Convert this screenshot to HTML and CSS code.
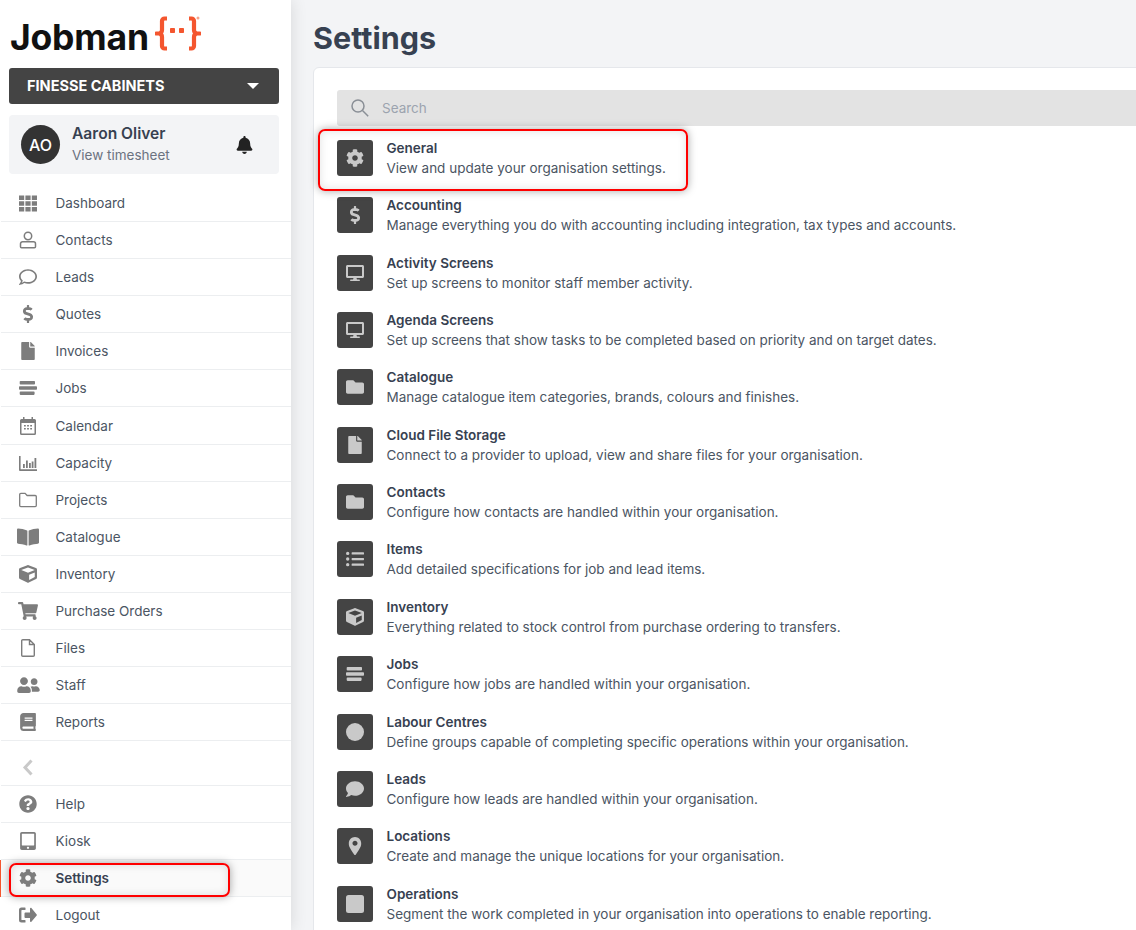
FILE: index.html
```html
<!DOCTYPE html>
<html lang="en">
<head>
<meta charset="utf-8">
<title>Settings</title>
<link rel="stylesheet" href="styles.css">
</head>
<body>
<svg class="defs" width="0" height="0" aria-hidden="true">
  <symbol id="i-th" viewBox="0 0 18 18"><path d="M0 1.500h5.200v4.600H0zM6.400 1.500h5.200v4.600H6.400zM12.800 1.500H18v4.600h-5.200zM0 7.200h5.200v4.600H0zM6.400 7.200h5.200v4.600H6.400zM12.800 7.200H18v4.600h-5.200zM0 12.900h5.200v4.600H0zM6.400 12.900h5.200v4.600H6.400zM12.800 12.900H18v4.600h-5.200z"/></symbol>
  <symbol id="i-user" viewBox="0 0 18 18"><g fill="none" stroke="currentColor" stroke-width="1.500"><circle cx="9" cy="5" r="3.700"/><path d="M3.500 10.800h11a2 2 0 0 1 2 2v2.900a1 1 0 0 1-1 1h-13a1 1 0 0 1-1-1v-2.900a2 2 0 0 1 2-2z"/></g></symbol>
  <symbol id="i-comment-o" viewBox="0 0 512 512"><path d="M256 32C114.600 32 0 125.100 0 240c0 49.600 21.400 95 57 130.700C44.500 421.100 2.700 466 2.200 466.500c-2.200 2.300-2.800 5.700-1.500 8.700S4.800 480 8 480c66.300 0 116-31.800 140.600-51.400 32.700 12.300 69 19.400 107.400 19.400 141.400 0 256-93.100 256-208S397.400 32 256 32zm0 368c-26.700 0-53.100-4.100-78.400-12.100l-22.700-7.200-19.500 13.800c-14.300 10.100-33.900 21.400-57.500 29 7.300-12.100 14.400-25.700 19.900-40.200l10.600-28.100-20.600-21.800C69.700 314.100 48 282.200 48 240c0-88.200 93.300-160 208-160s208 71.800 208 160-93.300 160-208 160z"/></symbol>
  <symbol id="i-comment" viewBox="0 0 512 512"><path d="M256 32C114.600 32 0 125.100 0 240c0 49.600 21.400 95 57 130.700C44.500 421.100 2.700 466 2.200 466.500c-2.200 2.300-2.800 5.700-1.500 8.700S4.800 480 8 480c66.300 0 116-31.800 140.600-51.400 32.700 12.300 69 19.400 107.400 19.400 141.400 0 256-93.100 256-208S397.400 32 256 32z"/></symbol>
  <symbol id="i-dollar" viewBox="0 0 288 512"><path d="M209.200 233.400l-108-31.600C88.700 198.200 80 186.500 80 173.500c0-16.300 13.200-29.500 29.500-29.500h66.300c12.200 0 24.200 3.700 34.200 10.500 6.100 4.100 14.300 3.100 19.500-2l34.800-34c7.100-6.900 6.100-18.400-1.800-24.500C238 74.800 207.400 64.100 176 64V16c0-8.800-7.200-16-16-16h-32c-8.800 0-16 7.200-16 16v48h-2.500C45.800 64-5.400 118.700.5 183.600c4.200 46.100 39.400 83.600 83.800 96.600l102.500 30c12.500 3.700 21.200 15.300 21.200 28.300 0 16.300-13.200 29.500-29.500 29.500h-66.300C100 368 88 364.300 78 357.500c-6.100-4.100-14.300-3.100-19.500 2l-34.800 34c-7.100 6.900-6.100 18.400 1.800 24.500 24.500 19.200 55.100 29.900 86.500 30v48c0 8.800 7.200 16 16 16h32c8.800 0 16-7.200 16-16v-48.200c46.600-.9 90.300-28.600 105.700-72.700 21.500-61.600-14.600-124.800-72.500-141.700z"/></symbol>
  <symbol id="i-file" viewBox="0 0 384 512"><path d="M224 136V0H24C10.700 0 0 10.700 0 24v464c0 13.300 10.700 24 24 24h336c13.300 0 24-10.700 24-24V160H248c-13.200 0-24-10.800-24-24zm160-14.100v6.100H256V0h6.100c6.400 0 12.500 2.500 17 7l97.900 98c4.500 4.500 7 10.600 7 16.900z"/></symbol>
  <symbol id="i-stream" viewBox="0 0 18 18"><path d="M1.500 2h13.700a.8.8 0 0 1 .8.8v1.900a.8.8 0 0 1-.8.8H1.500a.8.8 0 0 1-.8-.8V2.800a.8.8 0 0 1 .8-.8zM.8 7.200h16.400a.8.8 0 0 1 .8.8v1.900a.8.8 0 0 1-.8.8H.8a.8.8 0 0 1-.8-.8V8a.8.8 0 0 1 .8-.8zM1.500 12.400h13.300a.8.8 0 0 1 .8.8v1.900a.8.8 0 0 1-.8.8H1.500a.8.8 0 0 1-.8-.8v-1.900a.8.8 0 0 1 .8-.8z"/></symbol>
  <symbol id="i-calendar" viewBox="0 0 16 18"><path d="M3 0h1.500v2h7V0H13v2h1.500A1.500 1.500 0 0 1 16 3.500v13a1.500 1.500 0 0 1-1.500 1.500h-13A1.500 1.500 0 0 1 0 16.500v-13A1.500 1.500 0 0 1 1.500 2H3zM1.500 6v10.300c0 .1.100.2.200.2h12.600c.1 0 .2-.1.200-.2V6zM4 8h1.800v1.600H4zM7.100 8h1.800v1.600H7.100zM10.200 8H12v1.600h-1.800zM4 11h1.800v1.600H4zM7.100 11h1.800v1.600H7.100zM10.200 11H12v1.600h-1.800z"/></symbol>
  <symbol id="i-chart" viewBox="0 0 18 16"><path d="M0 1h1.600v13.200H18V16H1a1 1 0 0 1-1-1zM4 9h1.800v4H4zM7 5.500h1.800V13H7zM10 8h1.800v5H10zM12.700 6.500h1.800V13h-1.800zM15.500 3h1.800v10h-1.800z"/></symbol>
  <symbol id="i-folder-o" viewBox="0 0 18 15"><path fill="none" stroke="currentColor" stroke-width="1.300" d="M1.800.9h4.300l2 2.100h8.100c.6 0 1.100.5 1.100 1.100v8.900c0 .6-.5 1.100-1.100 1.100H1.800c-.6 0-1.100-.5-1.100-1.100V2c0-.6.500-1.100 1.100-1.100z"/></symbol>
  <symbol id="i-book-open" viewBox="0 0 576 512"><path d="M542.220 32.050c-54.800 3.110-163.720 14.430-230.960 55.590-4.640 2.840-7.270 7.890-7.270 13.170v363.870c0 11.550 12.630 18.850 23.280 13.490 69.180-34.820 169.230-44.320 218.700-46.920 16.890-.89 30.020-14.430 30.020-30.660V62.750c.01-17.710-15.350-31.740-33.770-30.700zM264.730 87.640C197.500 46.480 88.580 35.170 33.780 32.050 15.360 31.010 0 45.040 0 62.750V400.600c0 16.240 13.130 29.780 30.020 30.660 49.490 2.600 149.590 12.110 218.770 46.950 10.620 5.350 23.210-1.940 23.210-13.460V100.630c0-5.290-2.620-10.140-7.270-12.990z"/></symbol>
  <symbol id="i-cube" viewBox="0 0 512 512"><path d="M239.100 6.300l-208 78c-18.700 7-31.100 25-31.100 45v225.100c0 18.200 10.300 34.800 26.500 42.900l208 104c13.500 6.800 29.400 6.800 42.900 0l208-104c16.300-8.100 26.500-24.800 26.500-42.900V129.300c0-20-12.400-37.900-31.100-44.900l-208-78C262 2.200 250 2.200 239.100 6.300zM256 68.400l192 72v1.100l-192 78-192-78v-1.100l192-72zm32 356V275.500l160-65v133.900l-160 80z"/></symbol>
  <symbol id="i-cart" viewBox="0 0 576 512"><path d="M528.120 301.319l47.273-208C578.806 78.301 567.391 64 551.990 64H159.208l-9.166-44.810C147.758 8.021 137.930 0 126.529 0H24C10.745 0 0 10.745 0 24v16c0 13.255 10.745 24 24 24h69.883l70.248 343.435C147.325 417.100 136 435.222 136 456c0 30.928 25.072 56 56 56s56-25.072 56-56c0-15.674-6.447-29.835-16.824-40h209.647C430.447 426.165 424 440.326 424 456c0 30.928 25.072 56 56 56s56-25.072 56-56c0-22.172-12.888-41.332-31.579-50.405l5.517-24.276c3.413-15.018-8.002-29.319-23.403-29.319H218.117l-6.545-32h293.145c11.206 0 20.920-7.754 23.403-18.681z"/></symbol>
  <symbol id="i-file-o" viewBox="0 0 14 18"><path fill="none" stroke="currentColor" stroke-width="1.400" d="M1.800.7h6.700l4.800 4.800v10.700c0 .6-.5 1.100-1.100 1.100H1.800c-.6 0-1.100-.5-1.100-1.100V1.800C.7 1.200 1.200.7 1.800.7zM8.500.7v4.800h4.800"/></symbol>
  <symbol id="i-friends" viewBox="0 0 640 512"><path d="M192 256c61.900 0 112-50.100 112-112S253.900 32 192 32 80 82.100 80 144s50.100 112 112 112zm76.800 32h-8.300c-20.800 10-43.900 16-68.500 16s-47.600-6-68.500-16h-8.300C51.600 288 0 339.600 0 403.200V432c0 26.500 21.500 48 48 48h288c26.500 0 48-21.500 48-48v-28.800c0-63.600-51.600-115.200-115.200-115.200zM480 256c53 0 96-43 96-96s-43-96-96-96-96 43-96 96 43 96 96 96zm48 32h-3.800c-13.900 4.800-28.600 8-44.200 8s-30.300-3.200-44.200-8H432c-20.400 0-39.200 5.900-55.700 15.400 24.400 26.300 39.700 61.200 39.700 99.800v38.400c0 2.200-.5 4.300-.6 6.400H592c26.500 0 48-21.500 48-48 0-61.900-50.100-112-112-112z"/></symbol>
  <symbol id="i-book" viewBox="0 0 448 512"><path d="M448 360V24c0-13.300-10.700-24-24-24H96C43 0 0 43 0 96v320c0 53 43 96 96 96h328c13.300 0 24-10.700 24-24v-16c0-7.500-3.500-14.300-8.900-18.700-4.200-15.400-4.200-59.300 0-74.700 5.400-4.300 8.900-11.100 8.900-18.600zM128 134c0-3.300 2.700-6 6-6h212c3.300 0 6 2.700 6 6v20c0 3.300-2.700 6-6 6H134c-3.300 0-6-2.700-6-6v-20zm0 64c0-3.300 2.700-6 6-6h212c3.300 0 6 2.700 6 6v20c0 3.300-2.700 6-6 6H134c-3.300 0-6-2.700-6-6v-20zm253.400 250H96c-17.700 0-32-14.300-32-32 0-17.600 14.400-32 32-32h285.400c-1.900 17.100-1.900 46.900 0 64z"/></symbol>
  <symbol id="i-help" viewBox="0 0 512 512"><path d="M504 256c0 136.997-111.043 248-248 248S8 392.997 8 256C8 119.083 119.043 8 256 8s248 111.083 248 248zM262.655 90c-54.497 0-89.255 22.957-116.549 63.758-3.536 5.286-2.353 12.415 2.715 16.258l34.699 26.310c5.205 3.947 12.621 3.008 16.665-2.122 17.864-22.658 30.113-35.797 57.303-35.797 20.429 0 45.698 13.148 45.698 32.958 0 14.976-12.363 22.667-32.534 33.976C247.128 238.528 216 254.941 216 296v4c0 6.627 5.373 12 12 12h56c6.627 0 12-5.373 12-12v-1.333c0-28.462 83.186-29.647 83.186-106.667 0-58.002-60.165-102-116.531-102zM256 338c-25.365 0-46 20.635-46 46 0 25.364 20.635 46 46 46s46-20.636 46-46c0-25.365-20.635-46-46-46z"/></symbol>
  <symbol id="i-tablet" viewBox="0 0 448 512"><path d="M400 0H48C21.500 0 0 21.500 0 48v416c0 26.500 21.500 48 48 48h352c26.500 0 48-21.500 48-48V48c0-26.500-21.500-48-48-48zM224 480c-17.700 0-32-14.300-32-32s14.300-32 32-32 32 14.300 32 32-14.300 32-32 32zm176-108c0 6.600-5.400 12-12 12H60c-6.600 0-12-5.400-12-12V60c0-6.600 5.400-12 12-12h328c6.600 0 12 5.400 12 12v312z"/></symbol>
  <symbol id="i-cog" viewBox="0 0 512 512"><path d="M487.400 315.700l-42.600-24.600c4.300-23.200 4.300-47 0-70.200l42.600-24.600c4.900-2.800 7.100-8.600 5.500-14-11.100-35.600-30-67.800-54.700-94.600-3.800-4.100-10-5.100-14.800-2.300L380.800 110c-17.900-15.400-38.500-27.300-60.800-35.100V25.800c0-5.600-3.900-10.500-9.400-11.700-36.700-8.200-74.300-7.800-109.200 0-5.500 1.200-9.400 6.100-9.400 11.700V75c-22.200 7.900-42.800 19.800-60.800 35.100L88.700 85.500c-4.900-2.800-11-1.900-14.800 2.300-24.700 26.700-43.600 58.900-54.700 94.600-1.700 5.400.6 11.200 5.500 14L67.300 221c-4.300 23.200-4.300 47 0 70.200l-42.600 24.600c-4.900 2.800-7.100 8.600-5.500 14 11.100 35.600 30 67.800 54.700 94.600 3.800 4.100 10 5.100 14.800 2.300l42.600-24.600c17.900 15.400 38.500 27.300 60.800 35.100v49.200c0 5.600 3.900 10.500 9.400 11.700 36.700 8.200 74.300 7.800 109.200 0 5.500-1.200 9.400-6.100 9.400-11.700v-49.200c22.200-7.900 42.800-19.800 60.800-35.100l42.600 24.600c4.900 2.800 11 1.900 14.800-2.300 24.700-26.700 43.600-58.900 54.700-94.600 1.500-5.500-.7-11.300-5.600-14.100zM256 336c-44.100 0-80-35.900-80-80s35.900-80 80-80 80 35.900 80 80-35.900 80-80 80z"/></symbol>
  <symbol id="i-logout" viewBox="0 0 18 15"><path d="M2.500 0H6a.5.5 0 0 1 .5.5v1.400a.5.5 0 0 1-.5.5H3a.6.6 0 0 0-.6.6v9c0 .3.300.6.600.6h3a.5.5 0 0 1 .5.5v1.400a.5.5 0 0 1-.5.500H2.500A2.500 2.500 0 0 1 0 12.500v-10A2.500 2.500 0 0 1 2.500 0zM11 1.100c0-.7.900-1.100 1.400-.6l5.300 6.500c.3.300.3.800 0 1.100l-5.300 6.200c-.5.500-1.400.2-1.400-.6V10.500H6.400a.9.900 0 0 1-.9-.9V5.900c0-.5.400-.9.900-.9H11z"/></symbol>
  <symbol id="i-desktop" viewBox="0 0 576 512"><path d="M528 0H48C21.500 0 0 21.500 0 48v320c0 26.500 21.500 48 48 48h192l-16 48h-72c-13.300 0-24 10.700-24 24s10.700 24 24 24h272c13.300 0 24-10.700 24-24s-10.700-24-24-24h-72l-16-48h192c26.500 0 48-21.500 48-48V48c0-26.500-21.500-48-48-48zm-16 352H64V64h448v288z"/></symbol>
  <symbol id="i-folder" viewBox="0 0 512 512"><path d="M464 128H272l-64-64H48C21.490 64 0 85.490 0 112v288c0 26.510 21.490 48 48 48h416c26.510 0 48-21.490 48-48V176c0-26.510-21.490-48-48-48z"/></symbol>
  <symbol id="i-list" viewBox="0 0 512 512"><path d="M48 48a48 48 0 1 0 48 48 48 48 0 0 0-48-48zm0 160a48 48 0 1 0 48 48 48 48 0 0 0-48-48zm0 160a48 48 0 1 0 48 48 48 48 0 0 0-48-48zm448 16H176a16 16 0 0 0-16 16v32a16 16 0 0 0 16 16h320a16 16 0 0 0 16-16v-32a16 16 0 0 0-16-16zm0-320H176a16 16 0 0 0-16 16v32a16 16 0 0 0 16 16h320a16 16 0 0 0 16-16V80a16 16 0 0 0-16-16zm0 160H176a16 16 0 0 0-16 16v32a16 16 0 0 0 16 16h320a16 16 0 0 0 16-16v-32a16 16 0 0 0-16-16z"/></symbol>
  <symbol id="i-circle" viewBox="0 0 18 18"><circle cx="9" cy="9" r="9"/></symbol>
  <symbol id="i-marker" viewBox="0 0 352 512"><path d="M156.268 501.670C10.970 291.031 0 255.742 0 176 0 78.798 78.798 0 176 0s176 78.798 176 176c0 79.742-10.970 115.031-156.268 325.670-9.535 13.774-29.930 13.773-39.464 0zM176 248c39.765 0 72-32.235 72-72s-32.235-72-72-72-72 32.235-72 72 32.235 72 72 72z"/></symbol>
  <symbol id="i-square" viewBox="0 0 18 18"><rect width="18" height="18" rx="2.500"/></symbol>
  <symbol id="i-bell" viewBox="0 0 448 512"><path d="M224 512c35.320 0 63.970-28.650 63.970-64H160.030c0 35.350 28.650 64 63.970 64zm215.390-149.710c-19.320-20.760-55.470-51.990-55.470-154.290 0-77.700-54.480-139.900-127.940-155.160V32c0-17.670-14.320-32-31.980-32s-31.980 14.330-31.980 32v20.840C118.560 68.100 64.080 130.300 64.080 208c0 102.300-36.150 133.530-55.470 154.290-6 6.450-8.660 14.160-8.610 21.710.11 16.400 12.980 32 32.100 32h383.800c19.120 0 32-15.600 32.100-32 .05-7.550-2.610-15.270-8.610-21.710z"/></symbol>
</svg>

<div class="app">
  <aside class="sidebar">
    <div class="logo">
      <span class="logo-text">Jobman</span>
      <svg class="logo-mark" viewBox="0 0 46 36" aria-hidden="true">
        <g fill="none" stroke="#f4562f" stroke-width="4.200" stroke-linejoin="round">
          <path d="M12 2.500H9.500a2.500 2.500 0 0 0-2.500 2.500v9a3.500 3.500 0 0 1-3 3.500h-2.500 2.500a3.500 3.500 0 0 1 3 3.500v9a2.500 2.500 0 0 0 2.500 2.500H12"/>
          <path d="M34 2.500h2.500a2.500 2.500 0 0 1 2.500 2.500v9a3.500 3.500 0 0 0 3 3.500h2.500-2.500a3.500 3.500 0 0 0-3 3.500v9a2.500 2.500 0 0 1-2.500 2.500H34"/>
        </g>
        <rect x="15" y="12" width="5" height="5" rx=".8" fill="#f4562f"/>
        <rect x="24" y="12" width="5" height="5" rx=".8" fill="#f4562f"/>
        <circle cx="43" cy="2" r="1.500" fill="#f7a48c"/>
      </svg>
    </div>
    <div class="org">
      <span>FINESSE CABINETS</span>
      <span class="caret"></span>
    </div>
    <div class="profile">
      <div class="avatar">AO</div>
      <div class="profile-text">
        <div class="profile-name">Aaron Oliver</div>
        <div class="profile-sub">View timesheet</div>
      </div>
      <svg class="bell"><use href="#i-bell"/></svg>
    </div>
    <nav class="nav">
      <a class="nav-row"><span class="nav-ico"><svg class="ico-18"><use href="#i-th"/></svg></span>Dashboard</a>
      <a class="nav-row"><span class="nav-ico"><svg class="ico-18"><use href="#i-user"/></svg></span>Contacts</a>
      <a class="nav-row"><span class="nav-ico"><svg class="ico-18"><use href="#i-comment-o"/></svg></span>Leads</a>
      <a class="nav-row"><span class="nav-ico"><svg class="ico-18"><use href="#i-dollar"/></svg></span>Quotes</a>
      <a class="nav-row"><span class="nav-ico"><svg class="ico-18"><use href="#i-file"/></svg></span>Invoices</a>
      <a class="nav-row"><span class="nav-ico"><svg class="ico-18"><use href="#i-stream"/></svg></span>Jobs</a>
      <a class="nav-row"><span class="nav-ico"><svg class="ico-18"><use href="#i-calendar"/></svg></span>Calendar</a>
      <a class="nav-row"><span class="nav-ico"><svg class="ico-18"><use href="#i-chart"/></svg></span>Capacity</a>
      <a class="nav-row"><span class="nav-ico"><svg class="ico-18"><use href="#i-folder-o"/></svg></span>Projects</a>
      <a class="nav-row"><span class="nav-ico"><svg class="ico-22"><use href="#i-book-open"/></svg></span>Catalogue</a>
      <a class="nav-row"><span class="nav-ico"><svg class="ico-18"><use href="#i-cube"/></svg></span>Inventory</a>
      <a class="nav-row"><span class="nav-ico"><svg class="ico-20"><use href="#i-cart"/></svg></span>Purchase Orders</a>
      <a class="nav-row"><span class="nav-ico"><svg class="ico-18"><use href="#i-file-o"/></svg></span>Files</a>
      <a class="nav-row"><span class="nav-ico"><svg class="ico-23"><use href="#i-friends"/></svg></span>Staff</a>
      <a class="nav-row"><span class="nav-ico"><svg class="ico-18"><use href="#i-book"/></svg></span>Reports</a>
      <a class="nav-collapse"><span class="nav-ico chevron"><svg class="ico-18" viewBox="0 0 18 18"><path d="M12.500 2.500 6 9.500l6.500 7" fill="none" stroke="currentColor" stroke-width="3"/></svg></span></a>
      <a class="nav-row"><span class="nav-ico"><svg class="ico-18"><use href="#i-help"/></svg></span>Help</a>
      <a class="nav-row"><span class="nav-ico"><svg class="ico-18"><use href="#i-tablet"/></svg></span>Kiosk</a>
      <a class="nav-row active"><span class="nav-ico"><svg class="ico-18"><use href="#i-cog"/></svg></span>Settings</a>
      <a class="nav-row"><span class="nav-ico"><svg class="ico-18"><use href="#i-logout"/></svg></span>Logout</a>
    </nav>
  </aside>

  <main class="main">
    <h1 class="title">Settings</h1>
    <section class="card">
      <div class="search">
        <svg class="search-ico" viewBox="0 0 18 18"><g fill="none" stroke="currentColor" stroke-width="1.500"><circle cx="7" cy="7" r="6"/><path d="m11.500 11.500 5.700 5.700"/></g></svg>
        <span>Search</span>
      </div>
      <div class="list">
        <div class="item"><span class="tile"><svg class="tile-18"><use href="#i-cog"/></svg></span><div><div class="item-title">General</div><div class="item-desc">View and update your organisation settings.</div></div></div>
        <div class="item"><span class="tile"><svg class="tile-18"><use href="#i-dollar"/></svg></span><div><div class="item-title">Accounting</div><div class="item-desc">Manage everything you do with accounting including integration, tax types and accounts.</div></div></div>
        <div class="item"><span class="tile"><svg class="tile-18"><use href="#i-desktop"/></svg></span><div><div class="item-title">Activity Screens</div><div class="item-desc">Set up screens to monitor staff member activity.</div></div></div>
        <div class="item"><span class="tile"><svg class="tile-18"><use href="#i-desktop"/></svg></span><div><div class="item-title">Agenda Screens</div><div class="item-desc">Set up screens that show tasks to be completed based on priority and on target dates.</div></div></div>
        <div class="item"><span class="tile"><svg class="tile-18"><use href="#i-folder"/></svg></span><div><div class="item-title">Catalogue</div><div class="item-desc">Manage catalogue item categories, brands, colours and finishes.</div></div></div>
        <div class="item"><span class="tile"><svg class="tile-18"><use href="#i-file"/></svg></span><div><div class="item-title">Cloud File Storage</div><div class="item-desc">Connect to a provider to upload, view and share files for your organisation.</div></div></div>
        <div class="item"><span class="tile"><svg class="tile-18"><use href="#i-folder"/></svg></span><div><div class="item-title">Contacts</div><div class="item-desc">Configure how contacts are handled within your organisation.</div></div></div>
        <div class="item"><span class="tile"><svg class="tile-18"><use href="#i-list"/></svg></span><div><div class="item-title">Items</div><div class="item-desc">Add detailed specifications for job and lead items.</div></div></div>
        <div class="item"><span class="tile"><svg class="tile-18"><use href="#i-cube"/></svg></span><div><div class="item-title">Inventory</div><div class="item-desc">Everything related to stock control from purchase ordering to transfers.</div></div></div>
        <div class="item"><span class="tile"><svg class="tile-18"><use href="#i-stream"/></svg></span><div><div class="item-title">Jobs</div><div class="item-desc">Configure how jobs are handled within your organisation.</div></div></div>
        <div class="item"><span class="tile"><svg class="tile-18"><use href="#i-circle"/></svg></span><div><div class="item-title">Labour Centres</div><div class="item-desc">Define groups capable of completing specific operations within your organisation.</div></div></div>
        <div class="item"><span class="tile"><svg class="tile-18"><use href="#i-comment"/></svg></span><div><div class="item-title">Leads</div><div class="item-desc">Configure how leads are handled within your organisation.</div></div></div>
        <div class="item"><span class="tile"><svg class="tile-18"><use href="#i-marker"/></svg></span><div><div class="item-title">Locations</div><div class="item-desc">Create and manage the unique locations for your organisation.</div></div></div>
        <div class="item"><span class="tile"><svg class="tile-18"><use href="#i-square"/></svg></span><div><div class="item-title">Operations</div><div class="item-desc">Segment the work completed in your organisation into operations to enable reporting.</div></div></div>
      </div>
    </section>
  </main>
</div>

<div class="callout callout-general"></div>
<div class="callout callout-settings"></div>
</body>
</html>
```
FILE: styles.css
```css
* { box-sizing: border-box; }
html, body { margin: 0; height: 930px; overflow: hidden; }
body { font-family: Inter, "Liberation Sans", sans-serif; background: #f3f4f6; color: #374151; position: relative; }
.defs { position: absolute; }
.app { display: flex; height: 930px; overflow: hidden; }

.sidebar { flex: 0 0 291px; width: 291px; height: 930px; background: #fff; box-shadow: 0 0 16px rgba(0,0,0,.12); position: relative; z-index: 1; }
.logo { height: 68px; padding: 16px 0 0 10px; display: flex; align-items: flex-start; }
.logo-text { width: 138px; font-size: 35.500px; line-height: 44px; font-weight: 700; color: #111; letter-spacing: -.2px; white-space: nowrap; }
.logo-mark { width: 46px; height: 36px; margin-left: 7px; }

.org { margin-left: 9px; width: 270px; height: 36px; border-radius: 3px; background: #444; color: #fff; font-size: 14.500px; font-weight: 700; display: flex; align-items: center; justify-content: space-between; padding: 0 20px 1px 18px; }
.caret { width: 0; height: 0; border-left: 6px solid transparent; border-right: 6px solid transparent; border-top: 6px solid #fff; }

.profile { margin: 11px 0 0 9px; width: 270px; height: 59px; background: #f3f4f6; border-radius: 4px; display: flex; align-items: center; padding: 0 26px 0 12px; }
.avatar { width: 39px; height: 39px; border-radius: 50%; background: #333; color: #fff; font-size: 16px; font-weight: 500; display: flex; align-items: center; justify-content: center; margin-right: 12px; }
.profile-text { flex: 1; margin-top: -1px; }
.profile-name { font-size: 15.600px; line-height: 22px; font-weight: 600; color: #374151; }
.profile-sub { font-size: 13.500px; line-height: 20px; color: #6b7280; }
.bell { width: 17px; height: 18px; color: #222; fill: currentColor; }

.nav { margin-top: 11px; display: flex; flex-direction: column; }
.nav-row { height: 37.080px; flex: none; display: flex; align-items: center; font-size: 13.500px; color: #4b5563; border-bottom: 1px solid #eceef0; margin-left: 1px; }
.nav-ico { width: 54.500px; flex: none; display: flex; justify-content: center; color: #7d7d7d; }
.nav-ico svg { fill: currentColor; }
.ico-18 { width: 18px; height: 18px; }
.ico-20 { width: 20px; height: 18px; }
.ico-22 { width: 22px; height: 20px; }
.ico-23 { width: 23px; height: 18px; }
.nav-collapse { height: 45px; flex: none; display: flex; align-items: center; margin-left: 1px; padding-top: 7px; border-bottom: 1px solid #eceef0; }
.chevron { color: #c9c9c9; }
.active { font-weight: 600; color: #374151; background: #fafafa; box-shadow: -1px 0 0 #f4562f; }

.main { flex: 1; padding-left: 22px; min-width: 0; }
.title { margin: 0; height: 67px; padding-top: 18px; font-size: 30.500px; line-height: 40px; font-weight: 700; color: #374151; }
.card { width: 900px; height: 900px; background: #fff; border: 1px solid #e5e7eb; border-radius: 6px; padding: 22px 0 0 23px; }

.search { height: 36px; background: #e3e3e3; border-radius: 3px; display: flex; align-items: center; font-size: 13.500px; color: #9ca3af; }
.search-ico { width: 18px; height: 18px; margin: 0 13px 0 14px; color: #8a8f96; }

.list { margin-top: 3.100px; }
.item { height: 57.380px; display: flex; align-items: center; gap: 13.500px; }
.tile { width: 36px; height: 36px; flex: none; border-radius: 3px; background: #444; color: #c9c9c9; display: flex; align-items: center; justify-content: center; }
.tile-18 { width: 18px; height: 18px; fill: currentColor; }
.item-title { font-size: 13.500px; line-height: 20px; font-weight: 600; color: #374151; }
.item-desc { font-size: 13.500px; line-height: 20px; color: #4b5563; white-space: nowrap; }

.callout { position: absolute; border: 2px solid #f00; border-radius: 7px; box-shadow: 0 0 8px rgba(0,0,0,.35), inset 0 0 8px rgba(0,0,0,.12); z-index: 2; pointer-events: none; }
.callout-general { left: 318px; top: 129px; width: 370px; height: 62px; }
.callout-settings { left: 9px; top: 863px; width: 221px; height: 34px; }
```
